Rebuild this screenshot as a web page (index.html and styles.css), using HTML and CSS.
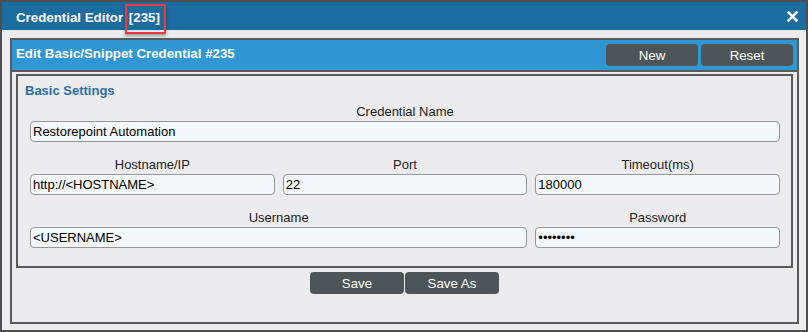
FILE: index.html
```html
<!DOCTYPE html>
<html>
<head>
<meta charset="utf-8">
<link rel="stylesheet" href="styles.css">
</head>
<body>
<div class="window">
  <div class="titlebar">
    <div class="title">Credential Editor <span class="hl">[235]</span></div>
    <svg class="close" width="11" height="11" viewBox="0 0 11 11"><path d="M1.5 1.5 L9.5 9.5 M9.5 1.5 L1.5 9.5" stroke="#fff" stroke-width="2.6" stroke-linecap="square"/></svg>
  </div>
  <div class="body">
    <div class="panel">
      <div class="panel-head">
        <div class="panel-title">Edit Basic/Snippet Credential #235</div>
        <div class="head-btns">
          <button class="btn hbtn">New</button>
          <button class="btn hbtn">Reset</button>
        </div>
      </div>
      <div class="settings">
        <div class="legend">Basic Settings</div>
        <div class="grid">
          <div class="field span3">
            <div class="label">Credential Name</div>
            <input class="inp" type="text" value="Restorepoint Automation">
          </div>
          <div class="field">
            <div class="label">Hostname/IP</div>
            <input class="inp" type="text" value="http://&lt;HOSTNAME&gt;">
          </div>
          <div class="field">
            <div class="label">Port</div>
            <input class="inp" type="text" value="22">
          </div>
          <div class="field">
            <div class="label">Timeout(ms)</div>
            <input class="inp" type="text" value="180000">
          </div>
          <div class="field span2">
            <div class="label">Username</div>
            <input class="inp" type="text" value="&lt;USERNAME&gt;">
          </div>
          <div class="field">
            <div class="label">Password</div>
            <input class="inp" type="password" value="password">
          </div>
        </div>
      </div>
      <div class="foot-btns">
        <button class="btn fbtn">Save</button>
        <button class="btn fbtn">Save As</button>
      </div>
    </div>
  </div>
</div>
</body>
</html>
```

FILE: styles.css
```css
* { box-sizing: border-box; }
html, body { margin: 0; padding: 0; }
body {
  background: #ececee;
  font-family: "Liberation Sans", Arial, sans-serif;
  font-size: 13px;
  width: 808px;
  height: 332px;
  overflow: hidden;
}
.window {
  width: 808px;
  height: 332px;
  border: 2px solid #4e4e4e;
  display: flex;
  flex-direction: column;
  background: #ececee;
}
.titlebar {
  height: 28px;
  background: #1b6c9f;
  display: flex;
  align-items: center;
  padding: 4px 8px 0 14px;
  color: #fff;
  flex: none;
}
.title {
  font-weight: bold;
  font-size: 13.3px;
  line-height: 24px;
  white-space: nowrap;
}
.hl {
  position: relative;
  display: inline-block;
  line-height: 14px;
  margin-left: 2px;
}
.hl::after {
  content: "";
  position: absolute;
  left: -4px;
  right: -6px;
  top: -7px;
  bottom: -9px;
  border: 2.5px solid #ec3a43;
  box-shadow: 0 2px 3px rgba(0,0,0,0.35);
}
.close { margin-left: auto; display: block; margin-top: -3px; }
.body {
  flex: 1;
  padding: 8px 7px 6px 8px;
  display: flex;
}
.panel {
  flex: 1;
  border: 2px solid #5a5a5a;
  display: flex;
  flex-direction: column;
}
.panel-head {
  height: 32px;
  background: #3197d4;
  border-bottom: 2px solid #5a5a5a;
  display: flex;
  align-items: center;
  padding: 0 4px 0 4px;
  flex: none;
}
.panel-title {
  color: #fff;
  font-weight: bold;
  font-size: 13.3px;
  margin-top: -3px;
}
.head-btns {
  margin-left: auto;
  display: flex;
  gap: 3px;
}
.btn {
  background: #4c5557;
  color: #fff;
  border: none;
  border-radius: 4px;
  font-family: "Liberation Sans", Arial, sans-serif;
  font-size: 13.3px;
  height: 22px;
  padding: 0;
  cursor: pointer;
}
.hbtn { width: 92px; }
.settings {
  margin: 2px 4px 0 4px;
  border: 2px solid #5a5a5a;
  padding: 7px 11px 18px 7px;
}
.legend {
  color: #2b6ea8;
  font-weight: bold;
  line-height: 16px;
  margin-bottom: 4px;
}
.grid {
  display: grid;
  grid-template-columns: 1fr 1fr 1fr;
  column-gap: 8px;
  row-gap: 14px;
  padding-left: 5px;
}
.span3 { grid-column: span 3; }
.span2 { grid-column: span 2; }
.field { display: flex; flex-direction: column; }
.label {
  text-align: center;
  color: #222;
  line-height: 18px;
}
.inp {
  height: 21px;
  width: 100%;
  border: 1px solid #969696;
  border-radius: 4px;
  background: #f5f8fa;
  font-family: "Liberation Sans", Arial, sans-serif;
  font-size: 13px;
  color: #000;
  padding: 0 2px;
  margin: 0;
  outline: none;
}
.foot-btns {
  display: flex;
  justify-content: center;
  gap: 1px;
  margin-top: 4px;
}
.fbtn { width: 94px; }
```
